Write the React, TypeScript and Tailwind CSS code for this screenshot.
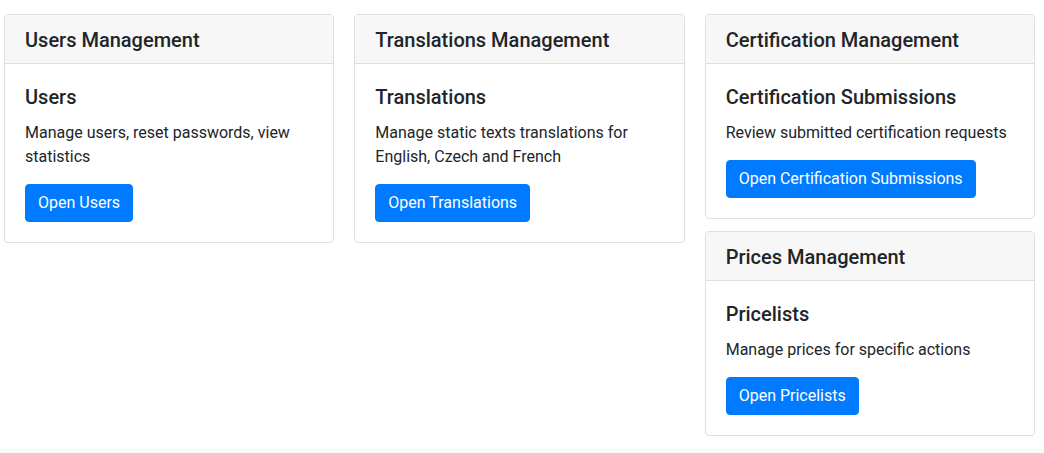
import React from 'react';

interface Panel {
  header: string;
  title: string;
  text: string;
  button: string;
}

const panels: Panel[][] = [
  [
    {
      header: 'Users Management',
      title: 'Users',
      text: 'Manage users, reset passwords, view statistics',
      button: 'Open Users',
    },
  ],
  [
    {
      header: 'Translations Management',
      title: 'Translations',
      text: 'Manage static texts translations for English, Czech and French',
      button: 'Open Translations',
    },
  ],
  [
    {
      header: 'Certification Management',
      title: 'Certification Submissions',
      text: 'Review submitted certification requests',
      button: 'Open Certification Submissions',
    },
    {
      header: 'Prices Management',
      title: 'Pricelists',
      text: 'Manage prices for specific actions',
      button: 'Open Pricelists',
    },
  ],
];

function Card({ panel }: { panel: Panel }) {
  return (
    <div className="rounded-[4px] border border-[#dfdfdf] bg-white">
      <div className="border-b border-[#dfdfdf] bg-[#f7f7f7] px-[20px] pt-[13px] pb-[11px] rounded-t-[3px]">
        <h5 className="text-[20px] leading-[24px] font-medium text-[#212529]">{panel.header}</h5>
      </div>
      <div className="p-[20px]">
        <h5 className="mb-[12px] pt-[1px] text-[20px] leading-[24px] font-medium text-[#212529]">{panel.title}</h5>
        <p className="mb-[15px] text-[16px] leading-[24px] text-[#212529]">{panel.text}</p>
        <button className="rounded-[4px] border border-[#007bff] bg-[#007bff] px-[12px] py-[6px] text-[16px] leading-[24px] text-white">
          {panel.button}
        </button>
      </div>
    </div>
  );
}

export default function App() {
  return (
    <div className="min-h-[453px] bg-white" style={{ fontFamily: 'Roboto, "Liberation Sans", sans-serif' }}>
      <div className="grid w-[1035px] grid-cols-3 gap-x-[20px] pl-[4px] pt-[14px] pb-[13px] items-start">
        {panels.map((col, i) => (
          <div key={i} className="flex flex-col gap-[12px]">
            {col.map((p) => (
              <Card key={p.header} panel={p} />
            ))}
          </div>
        ))}
      </div>
      <div className="h-[20px] bg-[#f8f9fa]" />
    </div>
  );
}
